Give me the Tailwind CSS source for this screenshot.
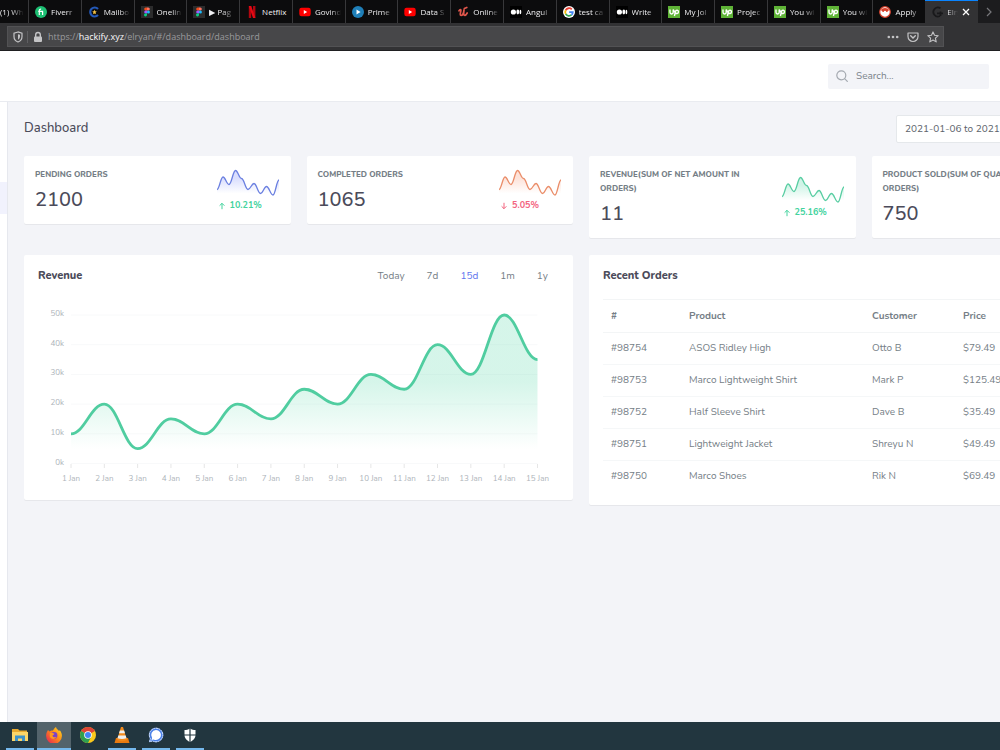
<!DOCTYPE html>
<html lang="en">
<head>
<meta charset="utf-8">
<meta name="viewport" content="width=device-width, initial-scale=1">
<title>Dashboard</title>
<script src="https://cdn.jsdelivr.net/npm/@tailwindcss/browser@4"></script>
</head>
<body class="flex h-screen flex-col overflow-hidden bg-[#f3f4f8] font-['Nunito','Lato',sans-serif] text-[#757e86]">

<!-- Shared symbols -->
<svg class="hidden" aria-hidden="true">
  <symbol id="figma" viewBox="0 0 12 12"><rect width="12" height="12" fill="#2c2c2c"/><path d="M6 1.5H4.7a1.5 1.5 0 000 3H6z" fill="#f24e1e"/><path d="M6 1.5h1.3a1.5 1.5 0 010 3H6z" fill="#ff7262"/><path d="M6 4.5H4.7a1.5 1.5 0 000 3H6z" fill="#a259ff"/><circle cx="7.4" cy="6" r="1.5" fill="#1abcfe"/><path d="M6 7.5H4.7A1.5 1.5 0 106 9z" fill="#0acf83"/></symbol>
  <symbol id="youtube" viewBox="0 0 12 12"><rect x=".3" y="1.8" width="11.4" height="8.4" rx="2.2" fill="#f00"/><path d="M4.8 4v4l3.4-2z" fill="#fff"/></symbol>
  <symbol id="medium" viewBox="0 0 12 12"><rect width="12" height="12" fill="#000"/><circle cx="3.4" cy="6" r="2.6" fill="#fff"/><ellipse cx="7.8" cy="6" rx="1.4" ry="2.4" fill="#fff"/><ellipse cx="10.4" cy="6" rx=".9" ry="2.2" fill="#fff"/></symbol>
  <symbol id="upwork" viewBox="0 0 12 12"><rect width="12" height="12" fill="#5fb336"/><path d="M2 3.5v2.700c0 2.300 3.200 2.300 3.200 0V3.500M6.400 10l1-4.400c.5-2 3.100-1.700 3.100.2 0 2.200-2.400 2.200-3.400.7L5.400 3.800" fill="none" stroke="#fff" stroke-width="1.400"/></symbol>
</svg>

<!-- Browser tabs -->
<nav aria-label="Browser tabs" class="flex h-[23px] shrink-0 bg-[#0c0c0d] font-['Open_Sans',sans-serif] text-[8px] text-[#f0f0f2]">
  <button class="flex w-7 items-center overflow-hidden whitespace-nowrap [mask-image:linear-gradient(to_right,black_40%,transparent_85%)]">(1) Wh</button>
  <div class="grid min-w-0 flex-1 grid-cols-18">
    <button class="flex min-w-0 items-center gap-1 border-l border-[#38383a] pr-1 pl-1.5"><svg class="size-3 shrink-0" viewBox="0 0 12 12"><circle cx="6" cy="6" r="6" fill="#1dbf73"/><path d="M4.300 9V4.600c0-1.100.6-1.600 1.800-1.400M3.200 5.300h4.400V9" fill="none" stroke="#fff" stroke-width="1.200"/></svg><span class="min-w-0 flex-1 overflow-hidden text-left whitespace-nowrap [mask-image:linear-gradient(to_right,black_60%,transparent)]">Fiverr</span></button>
    <button class="flex min-w-0 items-center gap-1 border-l border-[#38383a] pr-1 pl-1.5"><svg class="size-3 shrink-0" viewBox="0 0 12 12"><path d="M10 2.900A4.500 4.500 0 1010 9.100" fill="none" stroke="#2459b8" stroke-width="2.200"/><path d="M6.500 3.800l.7 1.500 1.600.2-1.200 1.100.3 1.600-1.400-.8-1.400.8.300-1.600-1.200-1.100 1.600-.2z" fill="#f6c443"/></svg><span class="min-w-0 flex-1 overflow-hidden text-left whitespace-nowrap [mask-image:linear-gradient(to_right,black_60%,transparent)]">Mailbo</span></button>
    <button class="flex min-w-0 items-center gap-1 border-l border-[#38383a] pr-1 pl-1.5"><svg class="size-3 shrink-0"><use href="#figma"/></svg><span class="min-w-0 flex-1 overflow-hidden text-left whitespace-nowrap [mask-image:linear-gradient(to_right,black_60%,transparent)]">Onelin</span></button>
    <button class="flex min-w-0 items-center gap-1 border-l border-[#38383a] pr-1 pl-1.5"><svg class="size-3 shrink-0"><use href="#figma"/></svg><span class="min-w-0 flex-1 overflow-hidden text-left whitespace-nowrap [mask-image:linear-gradient(to_right,black_50%,transparent)]">▶ Pag</span></button>
    <button class="flex min-w-0 items-center gap-1 border-l border-[#38383a] pr-1 pl-1.5"><svg class="size-3 shrink-0" viewBox="0 0 12 12"><path d="M2.800 0h2.400v12H2.800zM7 0h2.400v12H7z" fill="#b1060f"/><path d="M2.800 0h2.400l4.200 12H7z" fill="#e50914"/></svg><span class="min-w-0 flex-1 overflow-hidden text-left whitespace-nowrap">Netflix</span></button>
    <button class="flex min-w-0 items-center gap-1 border-l border-[#38383a] pr-1 pl-1.5"><svg class="size-3 shrink-0"><use href="#youtube"/></svg><span class="min-w-0 flex-1 overflow-hidden text-left whitespace-nowrap [mask-image:linear-gradient(to_right,black_60%,transparent)]">Govind</span></button>
    <button class="flex min-w-0 items-center gap-1 border-l border-[#38383a] pr-1 pl-1.5"><svg class="size-3 shrink-0" viewBox="0 0 12 12"><circle cx="6" cy="6" r="6" fill="#1f7fb8"/><path d="M4.500 3.600v4.800L8.600 6z" fill="#fff"/></svg><span class="min-w-0 flex-1 overflow-hidden text-left whitespace-nowrap [mask-image:linear-gradient(to_right,black_60%,transparent)]">Prime</span></button>
    <button class="flex min-w-0 items-center gap-1 border-l border-[#38383a] pr-1 pl-1.5"><svg class="size-3 shrink-0"><use href="#youtube"/></svg><span class="min-w-0 flex-1 overflow-hidden text-left whitespace-nowrap [mask-image:linear-gradient(to_right,black_60%,transparent)]">Data S</span></button>
    <button class="flex min-w-0 items-center gap-1 border-l border-[#38383a] pr-1 pl-1.5"><svg class="size-3 shrink-0" viewBox="0 0 12 12"><path d="M2 4.800c1-1.300 2-1.500 1.900-.4-.1 1.400-1.500 5.100.2 5.100 1.600 0 2.700-4 3-6.200-.3 2.700-1 6 .6 6 1.200 0 1.900-1.200 2.500-2.300M7.300 2.500l2.500-1" fill="none" stroke="#e2574c" stroke-width="1.700" stroke-linecap="round"/></svg><span class="min-w-0 flex-1 overflow-hidden text-left whitespace-nowrap [mask-image:linear-gradient(to_right,black_60%,transparent)]">Online</span></button>
    <button class="flex min-w-0 items-center gap-1 border-l border-[#38383a] pr-1 pl-1.5"><svg class="size-3 shrink-0"><use href="#medium"/></svg><span class="min-w-0 flex-1 overflow-hidden text-left whitespace-nowrap [mask-image:linear-gradient(to_right,black_60%,transparent)]">Angul</span></button>
    <button class="flex min-w-0 items-center gap-1 border-l border-[#38383a] pr-1 pl-1.5"><svg class="size-3 shrink-0" viewBox="0 0 12 12"><circle cx="6" cy="6" r="6" fill="#fff"/><g fill="none" stroke-width="1.800"><path d="M8.800 3.400A3.800 3.800 0 002.700 4.200" stroke="#ea4335"/><path d="M2.700 4.200a3.800 3.800 0 000 3.700" stroke="#fbbc05"/><path d="M2.700 7.900a3.800 3.800 0 005.800 1" stroke="#34a853"/><path d="M8.500 8.900A3.800 3.800 0 009.800 6.100H6.200" stroke="#4285f4"/></g></svg><span class="min-w-0 flex-1 overflow-hidden text-left whitespace-nowrap [mask-image:linear-gradient(to_right,black_50%,transparent)]">test ca</span></button>
    <button class="flex min-w-0 items-center gap-1 border-l border-[#38383a] pr-1 pl-1.5"><svg class="size-3 shrink-0"><use href="#medium"/></svg><span class="min-w-0 flex-1 overflow-hidden text-left whitespace-nowrap [mask-image:linear-gradient(to_right,black_60%,transparent)]">Write</span></button>
    <button class="flex min-w-0 items-center gap-1 border-l border-[#38383a] pr-1 pl-1.5"><svg class="size-3 shrink-0"><use href="#upwork"/></svg><span class="min-w-0 flex-1 overflow-hidden text-left whitespace-nowrap [mask-image:linear-gradient(to_right,black_60%,transparent)]">My Jol</span></button>
    <button class="flex min-w-0 items-center gap-1 border-l border-[#38383a] pr-1 pl-1.5"><svg class="size-3 shrink-0"><use href="#upwork"/></svg><span class="min-w-0 flex-1 overflow-hidden text-left whitespace-nowrap [mask-image:linear-gradient(to_right,black_60%,transparent)]">Projec</span></button>
    <button class="flex min-w-0 items-center gap-1 border-l border-[#38383a] pr-1 pl-1.5"><svg class="size-3 shrink-0"><use href="#upwork"/></svg><span class="min-w-0 flex-1 overflow-hidden text-left whitespace-nowrap [mask-image:linear-gradient(to_right,black_50%,transparent)]">You wi</span></button>
    <button class="flex min-w-0 items-center gap-1 border-l border-[#38383a] pr-1 pl-1.5"><svg class="size-3 shrink-0"><use href="#upwork"/></svg><span class="min-w-0 flex-1 overflow-hidden text-left whitespace-nowrap [mask-image:linear-gradient(to_right,black_50%,transparent)]">You wi</span></button>
    <button class="flex min-w-0 items-center gap-1 border-l border-[#38383a] pr-1 pl-1.5"><svg class="size-3 shrink-0" viewBox="0 0 12 12"><circle cx="6" cy="6" r="5.300" fill="#fff" stroke="#d8402b" stroke-width="1.200"/><path d="M2 4.300c.5-3 7.500-3 8 0L8.300 5.500 6 4.800l-2.300.7z" fill="#d8402b"/><circle cx="4.200" cy="5.200" r=".8" fill="#d8402b"/><circle cx="7.800" cy="5.200" r=".8" fill="#d8402b"/></svg><span class="min-w-0 flex-1 overflow-hidden text-left whitespace-nowrap [mask-image:linear-gradient(to_right,black_60%,transparent)]">Apply</span></button>
    <button aria-current="page" class="flex min-w-0 items-center gap-1 border-t border-[#0a84ff] bg-[#323234] pr-2 pl-1.5"><svg class="size-3 shrink-0" viewBox="0 0 12 12"><path d="M9.500 2.300A4.500 4.500 0 109 10M6 7.300h6M9.500 5.500v4.500" fill="none" stroke="#19191b" stroke-width="1.800"/></svg><span class="min-w-0 flex-1 overflow-hidden text-left whitespace-nowrap [mask-image:linear-gradient(to_right,black,transparent)]">Elry</span><svg class="size-2 shrink-0" viewBox="0 0 8 8"><path d="M1 1l6 6M7 1L1 7" stroke="#fff" stroke-width="1.300"/></svg></button>
  </div>
  <button aria-label="Scroll tabs" class="flex w-[22px] items-center justify-center bg-[#1c1c1e]"><svg class="size-2.5" viewBox="0 0 10 10"><path d="M3 1l4 4-4 4" fill="none" stroke="#77777b" stroke-width="1.200"/></svg></button>
</nav>

<!-- Address bar -->
<div class="flex h-7 shrink-0 border-b border-[#1f1f21] bg-[#323234] py-[3px] pr-14 pl-[7px] font-['Open_Sans',sans-serif] text-[9px]">
  <div class="flex flex-1 items-center border border-[#525254] bg-[#474749] pr-1">
    <button aria-label="Tracking protection" class="flex w-5 justify-center border-r border-[#606063]"><svg class="size-3" viewBox="0 0 12 12"><path d="M6 1L2 2.300V5.500C2 8.500 4 10.300 6 11c2-.7 4-2.500 4-5.500V2.300z" fill="none" stroke="#c4c4c6" stroke-width="1.200"/><path d="M6 3.200v5.500c1.300-.7 2-2 2-3.600V3.700z" fill="#c4c4c6"/></svg></button>
    <button aria-label="Connection secure" class="flex w-5 justify-center"><svg class="size-3" viewBox="0 0 12 12"><rect x="2" y="5.500" width="8" height="5.500" rx="1" fill="#c4c4c6"/><path d="M3.700 6V3.800a2.300 2.300 0 014.600 0V6" fill="none" stroke="#c4c4c6" stroke-width="1.400"/></svg></button>
    <div role="textbox" aria-label="Address" tabindex="0" class="flex-1 text-[#9a9a9d]">https://<span class="text-[#f9f9fa]">hackify.xyz</span>/elryan/#/dashboard/dashboard</div>
    <div class="flex items-center gap-2">
      <button aria-label="Page actions"><svg class="size-3" viewBox="0 0 12 12" fill="#c4c4c6"><circle cx="1.800" cy="6" r="1.300"/><circle cx="6" cy="6" r="1.300"/><circle cx="10.200" cy="6" r="1.300"/></svg></button>
      <button aria-label="Save to Pocket"><svg class="size-3" viewBox="0 0 12 12" fill="none" stroke="#c4c4c6" stroke-width="1.200" stroke-linecap="round"><path d="M1 2h10v3.500a5 5 0 01-10 0z" stroke-linejoin="round"/><path d="M3.700 4.800L6 7l2.300-2.200" stroke-width="1.400"/></svg></button>
      <button aria-label="Bookmark"><svg class="size-3" viewBox="0 0 12 12"><path d="M6 .9l1.500 3.400 3.700.4-2.800 2.500.8 3.700L6 9l-3.200 1.900.8-3.700L.8 4.700l3.700-.4z" fill="none" stroke="#c4c4c6" stroke-width="1.100" stroke-linejoin="round"/></svg></button>
    </div>
  </div>
</div>

<!-- Site header -->
<header class="flex h-[51px] shrink-0 items-center justify-end border-b border-[#e9ebf0] bg-white pr-[11px]">
  <label class="flex h-[25px] w-[161px] items-center gap-2 rounded-xs bg-[#f3f4f8] pl-2">
    <svg class="size-3 shrink-0" viewBox="0 0 12 12" fill="none" stroke="#a4a9b0" stroke-width="1.200"><circle cx="5.300" cy="5.300" r="4.500"/><path d="M8.600 8.600L11.700 11.700"/></svg>
    <input type="text" aria-label="Search" placeholder="Search..." class="w-full min-w-0 text-[10px] outline-none placeholder:text-[#7a828a]">
  </label>
</header>

<div class="flex min-h-0 flex-1">
  <aside class="w-2 shrink-0 border-r border-[#e6e8ee] bg-white pt-20"><div class="h-8 bg-[#f1f2fd]"></div></aside>

  <main class="min-w-0 flex-1 overflow-hidden pl-4">
    <div class="w-full min-w-[1114px]">
      <div class="flex h-[54px] items-center justify-between">
        <h1 class="text-[13px] font-medium text-[#4b4b5a]">Dashboard</h1>
        <input type="text" aria-label="Date range" value="2021-01-06 to 2021-01-13" class="h-7 w-[242px] rounded-xs border border-[#e5e8eb] bg-white px-2 text-[10px] text-[#5c636b] outline-none">
      </div>

      <div class="grid grid-cols-4 items-start gap-x-4">
        <section class="flex items-center justify-between rounded-xs bg-white px-[11px] py-3 shadow-2xs">
          <div><h2 class="text-[8px] leading-[14px] font-extrabold uppercase">Pending Orders</h2><p class="mt-[5px] text-xl leading-[25px] font-medium text-[#4b4b5a]">2100</p></div>
          <div class="shrink-0"><svg data-spark class="h-7 w-16" viewBox="0 0 64 28"><defs><linearGradient id="sparkBlue" x1="0" y1="0" x2="0" y2="1"><stop offset=".3" stop-color="#5369f8" stop-opacity=".22"/><stop offset=".9" stop-color="#5369f8" stop-opacity="0"/></linearGradient></defs><path fill="url(#sparkBlue)"/><path fill="none" stroke="#6a7fe0" stroke-width="1.300"/></svg>
          <p class="mt-1 flex h-3 items-center gap-1 pl-0.5 text-[9px] font-bold text-[#43d39e]"><svg class="size-2" viewBox="0 0 8 8"><path d="M4 7.200V1.300M1.600 3.700L4 1.300l2.400 2.400" fill="none" stroke="currentColor"/></svg>10.21%</p></div>
        </section>
        <section class="flex items-center justify-between rounded-xs bg-white px-[11px] py-3 shadow-2xs">
          <div><h2 class="text-[8px] leading-[14px] font-extrabold uppercase">Completed Orders</h2><p class="mt-[5px] text-xl leading-[25px] font-medium text-[#4b4b5a]">1065</p></div>
          <div class="shrink-0"><svg data-spark class="h-7 w-16" viewBox="0 0 64 28"><defs><linearGradient id="sparkOrange" x1="0" y1="0" x2="0" y2="1"><stop offset=".3" stop-color="#f77e53" stop-opacity=".22"/><stop offset=".9" stop-color="#f77e53" stop-opacity="0"/></linearGradient></defs><path fill="url(#sparkOrange)"/><path fill="none" stroke="#ea8d69" stroke-width="1.300"/></svg>
          <p class="mt-1 flex h-3 items-center gap-1 pl-0.5 text-[9px] font-bold text-[#f3647f]"><svg class="size-2" viewBox="0 0 8 8"><path d="M4 .8v5.900M1.600 4.300L4 6.700l2.400-2.400" fill="none" stroke="currentColor"/></svg>5.05%</p></div>
        </section>
        <section class="flex items-center justify-between rounded-xs bg-white px-[11px] py-3 shadow-2xs">
          <div><h2 class="text-[8px] leading-[14px] font-extrabold uppercase">Revenue(Sum of net amount in<br>orders)</h2><p class="mt-[5px] text-xl leading-[25px] font-medium text-[#4b4b5a]">11</p></div>
          <div class="shrink-0"><svg data-spark class="h-7 w-16" viewBox="0 0 64 28"><defs><linearGradient id="sparkGreen" x1="0" y1="0" x2="0" y2="1"><stop offset=".3" stop-color="#43d39e" stop-opacity=".25"/><stop offset=".9" stop-color="#43d39e" stop-opacity="0"/></linearGradient></defs><path fill="url(#sparkGreen)"/><path fill="none" stroke="#58cda2" stroke-width="1.300"/></svg>
          <p class="mt-1 flex h-3 items-center gap-1 pl-0.5 text-[9px] font-bold text-[#43d39e]"><svg class="size-2" viewBox="0 0 8 8"><path d="M4 7.200V1.300M1.600 3.700L4 1.300l2.400 2.400" fill="none" stroke="currentColor"/></svg>25.16%</p></div>
        </section>
        <section class="rounded-xs bg-white px-[11px] py-3 shadow-2xs">
          <h2 class="text-[8px] leading-[14px] font-extrabold uppercase">Product Sold(Sum of quantity in<br>orders)</h2><p class="mt-[5px] text-xl leading-[25px] font-medium text-[#4b4b5a]">750</p>
        </section>
      </div>

      <div class="mt-[17px] grid grid-cols-2 items-start gap-x-4">
        <section class="rounded-xs bg-white shadow-2xs">
          <div class="flex h-[43px] items-center justify-between pr-[25px] pl-3.5">
            <h2 class="text-[11px] font-extrabold text-[#4b4b5a]">Revenue</h2>
            <div class="flex gap-[22px] text-[10px]">
              <button>Today</button><button>7d</button><button class="text-[#6074ee]">15d</button><button>1m</button><button>1y</button>
            </div>
          </div>
          <svg id="chart" class="w-full text-[8px]" viewBox="0 0 549 202" role="img" aria-label="Revenue per day">
            <defs><linearGradient id="area" gradientUnits="userSpaceOnUse" x1="0" y1="17" x2="0" y2="166"><stop offset=".45" stop-color="#43d39e" stop-opacity=".22"/><stop offset=".9" stop-color="#43d39e" stop-opacity="0"/></linearGradient></defs>
            <g id="grid" stroke="#f8f9fa"></g>
            <path id="fill" fill="url(#area)"/>
            <path id="line" fill="none" stroke="#50cda0" stroke-width="2.800"/>
            <g id="ticks" stroke="#e6e6e6"></g>
            <g id="ylabels" fill="#adb3b9" text-anchor="end"></g>
            <g id="xlabels" fill="#adb3b9" text-anchor="middle"></g>
          </svg>
        </section>

        <section class="rounded-xs bg-white px-3.5 pb-3 shadow-2xs">
          <div class="flex h-11 items-center pb-px"><h2 class="text-[11px] font-extrabold text-[#4b4b5a]">Recent Orders</h2></div>
          <table class="w-full table-fixed text-left text-[10px] leading-[15px]">
            <colgroup><col class="w-[78px]"><col class="w-[183px]"><col class="w-[91px]"><col class="w-[80px]"><col></colgroup>
            <thead><tr class="h-[33px] border-y border-[#f3f5f6]"><th class="px-2">#</th><th class="px-2">Product</th><th class="px-2">Customer</th><th class="px-2">Price</th><th class="px-2">Status</th></tr></thead>
            <tbody>
              <tr class="h-8 border-b border-[#f5f7f8]"><td class="px-2">#98754</td><td class="px-2">ASOS Ridley High</td><td class="px-2">Otto B</td><td class="px-2">$79.49</td><td></td></tr>
              <tr class="h-8 border-b border-[#f5f7f8]"><td class="px-2">#98753</td><td class="px-2">Marco Lightweight Shirt</td><td class="px-2">Mark P</td><td class="px-2">$125.49</td><td></td></tr>
              <tr class="h-8 border-b border-[#f5f7f8]"><td class="px-2">#98752</td><td class="px-2">Half Sleeve Shirt</td><td class="px-2">Dave B</td><td class="px-2">$35.49</td><td></td></tr>
              <tr class="h-8 border-b border-[#f5f7f8]"><td class="px-2">#98751</td><td class="px-2">Lightweight Jacket</td><td class="px-2">Shreyu N</td><td class="px-2">$49.49</td><td></td></tr>
              <tr class="h-8"><td class="px-2">#98750</td><td class="px-2">Marco Shoes</td><td class="px-2">Rik N</td><td class="px-2">$69.49</td><td></td></tr>
            </tbody>
          </table>
        </section>
      </div>
    </div>
  </main>
</div>

<!-- Taskbar -->
<footer class="flex h-7 shrink-0 bg-[#22363f] pl-[3px]">
  <button aria-label="File Explorer" class="mx-[3px] flex w-7 items-center justify-center border-b-2 border-[#76b9ed]"><svg class="size-4" viewBox="0 0 16 16"><path d="M0 2h6l1.500 1.500H15V6H0z" fill="#e8a92e"/><path d="M0 5h16v9H0z" fill="#fbd568"/><path d="M3 14V8.500h10V14h-3v-2.500H6V14z" fill="#3d92c9"/></svg></button>
  <button aria-label="Firefox" class="flex w-[34px] items-center justify-center border-b-2 border-[#76b9ed] bg-[#53636b]"><svg class="size-4" viewBox="0 0 16 16"><defs><linearGradient id="fox" x1="1" y1="0" x2="0" y2="1"><stop stop-color="#ffe226"/><stop offset=".45" stop-color="#ff8a16"/><stop offset="1" stop-color="#e3175f"/></linearGradient></defs><path d="M2 3l1.500 1.500C5 3.200 6 3.500 7 3.500 8 1.500 9 .7 10 0c0 2 2.500 2.800 3 4l.8-.8C15.300 5 16 7 15.900 9A7.900 7.900 0 01.1 9C0 6.500 1 4.500 2 3z" fill="url(#fox)"/><circle cx="8" cy="8.500" r="3.400" fill="#7a41c9"/><path d="M4 6c2-.5 3 .3 4.500.8C8 8 6.500 8 6.500 9c.7 1.700 3 1.600 4 .7-.5 2.800-6 3.300-6.800-.7z" fill="#ff9a1c"/></svg></button>
  <button aria-label="Chrome" class="mx-[3px] flex w-7 items-center justify-center border-b-2 border-transparent"><svg class="size-4" viewBox="0 0 16 16"><circle cx="8" cy="8" r="8" fill="#fbc91c"/><path d="M8 8L1.100 4A8 8 0 0114.900 4z" fill="#de4437"/><path d="M1.100 4A8 8 0 008 16l3.200-6.200L8 8z" fill="#2fa050"/><circle cx="8" cy="8" r="3.800" fill="#fff"/><circle cx="8" cy="8" r="3" fill="#4285f4"/></svg></button>
  <button aria-label="VLC" class="mx-[3px] flex w-7 items-center justify-center border-b-2 border-[#76b9ed]"><svg class="size-4" viewBox="0 0 16 16"><path d="M2 11h12l1.500 5H.5z" fill="#e97a10"/><path d="M7 0h2l4 13c-3 1.500-7 1.500-10 0z" fill="#f28a1c"/><path d="M5.900 3.500h4.200l.9 2.800H5zM4.300 8.500h7.400l.8 2.700c-3 1-6 1-9 0z" fill="#eef0f0"/></svg></button>
  <button aria-label="Signal" class="mx-[3px] flex w-7 items-center justify-center border-b-2 border-[#76b9ed]"><svg class="size-4" viewBox="0 0 16 16"><path d="M8 .8a7.200 7.200 0 11-3.400 13.500L1 15.200l.9-3.600A7.200 7.200 0 018 .8z" fill="#4a80e8"/><path d="M8 1.200a6.800 6.800 0 11-3.400 12.700l-3 .8.800-3A6.800 6.800 0 018 1.200z" fill="none" stroke="#dfe9fb" stroke-width="1" stroke-dasharray="2 .5"/><path d="M8 3a5 5 0 11-2.400 9.400l-2.100.6.600-2.100A5 5 0 018 3z" fill="#fff"/></svg></button>
  <button aria-label="Windows Security" class="mx-[3px] flex w-7 items-center justify-center border-b-2 border-[#76b9ed]"><svg class="size-4" viewBox="0 0 16 16"><path d="M8 1.500c2 1.200 3.500 1.500 5.500 1.500v5c0 3.500-2.500 5.500-5.500 7-3-1.500-5.500-3.500-5.500-7V3C4.500 3 6 2.700 8 1.500z" fill="#fff"/><path d="M8 1v14.500M2 8h12" stroke="#22363f" stroke-width="1.200"/></svg></button>
</footer>

<script>
  // Smooth curve whose tangents are flat at every point.
  function curve(points) {
    return points.reduce((d, [x, y], i) => {
      if (i === 0) return `M${x} ${y}`;
      const [px, py] = points[i - 1];
      const k = (x - px) * 0.4;
      return `${d}C${px + k} ${py} ${x - k} ${y} ${x} ${y}`;
    }, '');
  }

  const spark = [[1,21.5],[7,9],[13,16.5],[19.5,2.5],[25.5,10.5],[32,21.5],[38,15.5],[44.5,25.5],[50.5,18.5],[57,27],[63,12]];
  document.querySelectorAll('[data-spark]').forEach(svg => {
    const [fill, line] = svg.querySelectorAll(':scope > path');
    fill.setAttribute('d', curve(spark) + 'V28H1Z');
    line.setAttribute('d', curve(spark));
  });

  const values = [10, 20, 5, 15, 10, 20, 15, 25, 20, 30, 25, 40, 30, 50, 35];
  const X = i => 47 + i * 33.32;
  const Y = v => 165.5 - v * 2.97;
  const points = values.map((v, i) => [X(i), Y(v)]);
  document.getElementById('line').setAttribute('d', curve(points));
  document.getElementById('fill').setAttribute('d', `${curve(points)}V${Y(0)}H47Z`);
  const ticks = [0, 10, 20, 30, 40, 50];
  document.getElementById('grid').innerHTML = ticks.map(v => `<path d="M47 ${Y(v)}H${X(14)}"/>`).join('');
  document.getElementById('ylabels').innerHTML = ticks.map(v => `<text x="40" y="${Y(v) + 1}">${v}k</text>`).join('');
  document.getElementById('ticks').innerHTML = values.map((_, i) => `<path d="M${X(i)} 166v4"/>`).join('');
  document.getElementById('xlabels').innerHTML = values.map((_, i) => `<text x="${X(i)}" y="183">${i + 1} Jan</text>`).join('');
</script>
</body>
</html>
